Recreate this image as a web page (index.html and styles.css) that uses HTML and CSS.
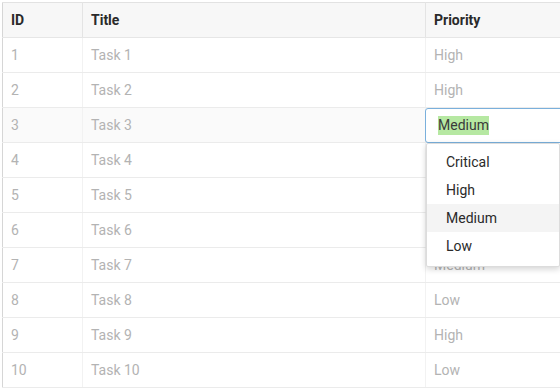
FILE: index.html
```html
<!DOCTYPE html>
<html>
<head>
<meta charset="utf-8">
<link rel="stylesheet" href="styles.css">
</head>
<body>
<div class="wrap">
<table class="grid">
  <colgroup><col class="c-id"><col class="c-title"><col class="c-pri"></colgroup>
  <thead>
    <tr><th>ID</th><th>Title</th><th>Priority</th></tr>
  </thead>
  <tbody>
    <tr><td>1</td><td>Task 1</td><td>High</td></tr>
    <tr><td>2</td><td>Task 2</td><td>High</td></tr>
    <tr class="active"><td>3</td><td>Task 3</td><td class="editing">
      <div class="editor"><span class="sel">Medium</span></div>
      <ul class="menu">
        <li>Critical</li>
        <li>High</li>
        <li class="hover">Medium</li>
        <li>Low</li>
      </ul>
    </td></tr>
    <tr><td>4</td><td>Task 4</td><td></td></tr>
    <tr><td>5</td><td>Task 5</td><td></td></tr>
    <tr><td>6</td><td>Task 6</td><td></td></tr>
    <tr><td>7</td><td>Task 7</td><td>Medium</td></tr>
    <tr><td>8</td><td>Task 8</td><td>Low</td></tr>
    <tr><td>9</td><td>Task 9</td><td>High</td></tr>
    <tr><td>10</td><td>Task 10</td><td>Low</td></tr>
  </tbody>
</table>
</div>
</body>
</html>
```
FILE: styles.css
```css
html, body {
  margin: 0;
  padding: 0;
  background: #fff;
  overflow: hidden;
}
body {
  font-family: Roboto, "Liberation Sans", sans-serif;
  font-size: 14px;
}
.wrap {
  padding: 2px 0 0 2px;
  width: 558px;
  height: 386px;
  overflow: hidden;
}
.grid {
  border-collapse: collapse;
  table-layout: fixed;
  width: 600px;
  border-left: 1px solid #d6d6d6;
  border-top: 1px solid #e2e2e2;
}
.c-id { width: 80px; }
.c-title { width: 343px; }
.c-pri { width: 177px; }
.grid th, .grid td {
  height: 35px;
  padding: 0 8px;
  text-align: left;
  border-bottom: 1px solid #ebebeb;
  border-right: 1px solid #f2f2f2;
  box-sizing: border-box;
}
.grid th {
  background: #f7f7f7;
  color: #2a2a2a;
  font-weight: bold;
  border-bottom: 1px solid #e6e6e6;
  border-right: 1px solid #e4e4e4;
}
.grid td {
  color: #b3b3b3;
}
.grid tr.active td {
  background: #fafafa;
}
.grid td.editing {
  position: relative;
  background: #fff;
}
.editor {
  position: absolute;
  left: -1px;
  top: 0;
  width: 150px;
  height: 35px;
  box-sizing: border-box;
  border: 1px solid #7ab0dc;
  border-radius: 3px;
  background: #fff;
  padding: 0 0 0 12px;
  display: flex;
  align-items: center;
  z-index: 2;
}
.sel {
  background: #b6e8a2;
  color: #3a3a3a;
  line-height: 19px;
}
.menu {
  position: absolute;
  left: 0;
  top: 35px;
  width: 132px;
  margin: 0;
  padding: 4px 0 6px;
  list-style: none;
  background: #fff;
  border: 1px solid #dcdcdc;
  border-radius: 2px;
  box-shadow: 0 2px 6px rgba(0,0,0,0.18);
  z-index: 3;
}
.menu li {
  height: 28px;
  line-height: 28px;
  padding-left: 19px;
  color: #2a2a2a;
}
.menu li.hover {
  background: #f4f4f4;
}
```
